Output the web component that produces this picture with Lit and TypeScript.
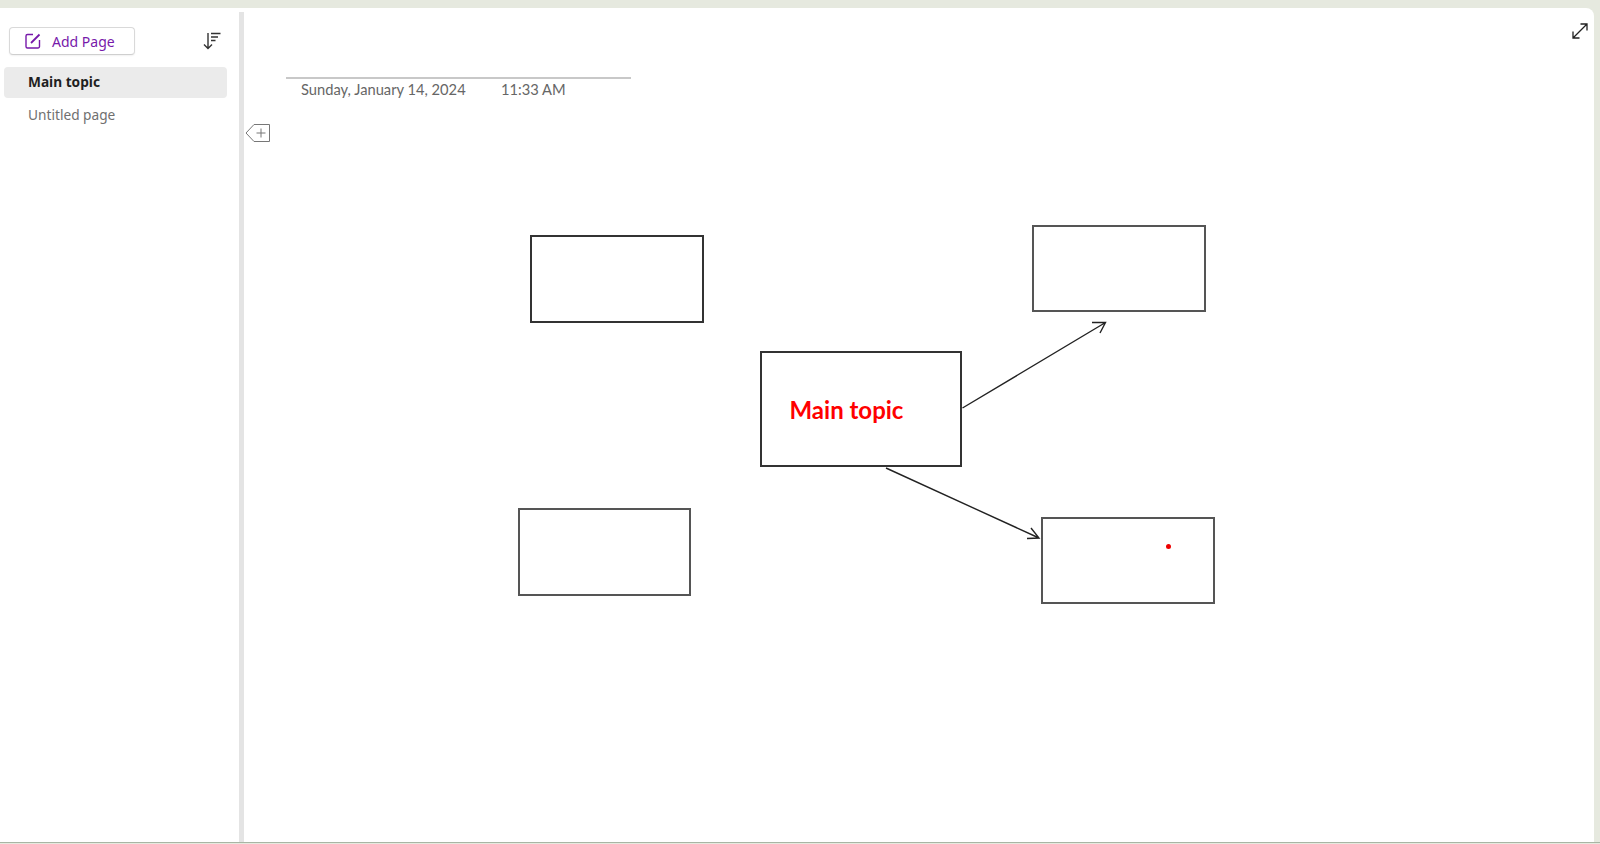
import { LitElement, html, css, svg } from "lit";
import { customElement } from "lit/decorators.js";

type Box = { x: number; y: number; w: number; h: number; c: string };
const boxes: Box[] = [
  { x: 530, y: 235, w: 174, h: 88, c: "#333" },
  { x: 1032, y: 225, w: 174, h: 87, c: "#555" },
  { x: 760, y: 351, w: 202, h: 116, c: "#333" },
  { x: 518, y: 508, w: 173, h: 88, c: "#555" },
  { x: 1041, y: 517, w: 174, h: 87, c: "#555" },
];

@customElement("app-root")
export class AppRoot extends LitElement {
  static styles = css`
    :host { display: block; font-family: "Noto Sans", "Open Sans", sans-serif; }
    .frame { height: 844px; box-sizing: border-box; background: #e6e9df; padding: 8px 6px 1px 0; display: flex; flex-direction: column; }
    .bottom { height: 1px; background: #a9b5a4; margin-right: -6px; flex: none; }
    .panel { flex: 1; min-height: 0; background: #fff; border-top-right-radius: 8px; display: flex; }
    .side { width: 239px; flex: none; display: flex; flex-direction: column; padding: 19px 12px 0 4px; box-sizing: border-box; }
    .tools { display: flex; align-items: center; justify-content: space-between; padding: 0 6px 0 5px; height: 28px; margin-bottom: 12px; }
    .add { width: 126px; height: 28px; box-sizing: border-box; border: 1px solid #d9d9d9; border-bottom-color: #cfcfcf; border-radius: 4px; background: #fff; display: flex; align-items: center; gap: 10px; padding: 0 0 0 14px; color: #7719aa; font-size: 14px; font-family: inherit; box-shadow: 0 1px 2px rgba(0,0,0,.06); }
    .add svg, .sort { display: block; flex: none; }
    .row { height: 31px; box-sizing: border-box; display: flex; align-items: center; padding: 0 0 2px 24px; font-size: 13.7px; border-radius: 4px; color: #707070; margin-bottom: 2px; }
    .row.on { background: #ebebeb; color: #1f1f1f; font-weight: 700; }
    .split { width: 5px; flex: none; background: #e4e4e4; margin-top: 4px; }
    .page { flex: 1; position: relative; overflow: hidden; }
    .meta { position: absolute; left: 42px; top: 69px; width: 345px; box-sizing: border-box; border-top: 2px solid #c8c8c8; display: flex; padding: 1px 0 0 15px; font-family: Lato, sans-serif; font-size: 14.7px; line-height: 18px; color: #666; }
    .meta span:first-child { width: 200px; }
    .tag { position: absolute; left: 1px; top: 115px; display: block; }
    .expand { position: absolute; right: 5px; top: 14px; display: block; }
    .canvas { position: absolute; left: -244px; top: -8px; width: 1600px; height: 844px; pointer-events: none; }
    .node { position: absolute; box-sizing: border-box; border: 2px solid #333; background: #fff; }
    .label { position: absolute; left: 789.5px; top: 395px; font-family: Lato, sans-serif; font-weight: 700; font-size: 24px; line-height: 30px; color: #f00; white-space: nowrap; }
    .dot { position: absolute; left: 1166px; top: 544px; width: 5px; height: 5px; border-radius: 50%; background: #e00; }
    .lines { position: absolute; inset: 0; display: block; }
  `;

  render() {
    return html`<div class="frame">
      <div class="panel">
        <aside class="side">
          <div class="tools">
            <button class="add">
              <svg width="18" height="18" viewBox="0 0 18 18" fill="none" stroke="#7719aa" stroke-width="1.4">
                <path d="M9 2.500H3.500A1.500 1.500 0 0 0 2 4V14.500A1.500 1.500 0 0 0 3.500 16H14A1.500 1.500 0 0 0 15.500 14.500V8" />
                <path d="M7 11L15.500 2.500" stroke-width="1.800" />
              </svg>
              <span>Add Page</span>
            </button>
            <svg class="sort" width="18" height="18" viewBox="0 0 18 18" fill="none" stroke="#333" stroke-width="1.400">
              <path d="M5 1V16.500M1 12.500L5 16.500L9 12.500" />
              <path d="M8 1.500H17.500M8 5H15M8 8.500H12.500" />
            </svg>
          </div>
          <div class="row on">Main topic</div>
          <div class="row">Untitled page</div>
        </aside>
        <div class="split"></div>
        <main class="page">
          <div class="meta"><span>Sunday, January 14, 2024</span><span>11:33 AM</span></div>
          <svg class="tag" width="26" height="20" viewBox="0 0 26 20" fill="none" stroke="#777" stroke-width="1">
            <path d="M24.500 1.500V18.500H9L1 10L9 1.500Z" />
            <path d="M11.500 10H20.500M16 5.500V14.500" />
          </svg>
          <svg class="expand" width="18" height="18" viewBox="0 0 18 18" fill="none" stroke="#222" stroke-width="1.300">
            <path d="M2 16L16 2M9.500 2H16V8.500M2 9.500V16H8.500" />
          </svg>
          <div class="canvas">
            ${boxes.map((b) => html`<div class="node" style="left:${b.x}px;top:${b.y}px;width:${b.w}px;height:${b.h}px;border-color:${b.c}"></div>`)}
            <div class="label">Main topic</div>
            <div class="dot"></div>
            <svg class="lines" width="1600" height="844" viewBox="0 0 1600 844" fill="none" stroke="#222" stroke-width="1.400">
              ${svg`<path d="M962.500 408L1105.500 322.500M1092 322.500H1105.500L1100 333" />
              <path d="M886 468L1039 538M1031 528L1039 538L1027 538.500" />`}
            </svg>
          </div>
        </main>
      </div>
      <div class="bottom"></div>
    </div>`;
  }
}
